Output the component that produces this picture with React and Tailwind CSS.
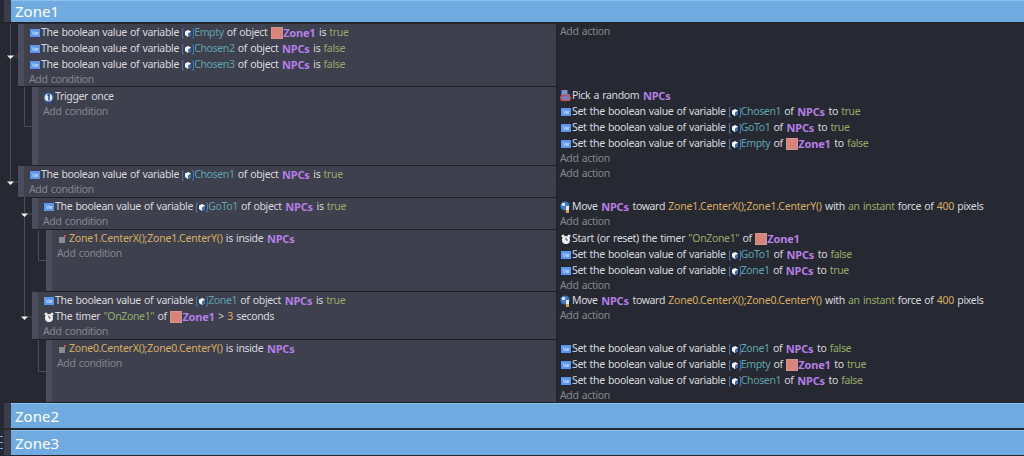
import React from "react";

function VarIcon() {
  return (
    <svg width="10" height="8" viewBox="0 0 10 8" className="shrink-0">
      <rect width="10" height="8" fill="#5b95ee" />
      <text x="5" y="6" fontSize="5" fill="#dbe8fb" textAnchor="middle" fontFamily="Liberation Sans">Var</text>
    </svg>
  );
}

function BoxIcon() {
  return (
    <svg width="12" height="11" viewBox="0 0 12 11" className="shrink-0">
      <path d="M2 1H.5V10H2M10 1H11.500V10H10" stroke="#3f74bd" fill="none" />
      <path d="M6 2l3 1.500V7L6 9 3 7V3.500z" fill="#f4f6fa" />
      <path d="M6 5.500L9 3.500V7L6 9z" fill="#3d6cad" />
    </svg>
  );
}

function Swatch() {
  return <span className="w-3 h-3 shrink-0 bg-[#d9847b] border border-[#c4b0ae]/40" />;
}

function OnceIcon() {
  return (
    <svg width="11" height="11" viewBox="0 0 11 11" className="shrink-0">
      <circle cx="5.500" cy="5.500" r="5.200" fill="#3560a8" />
      <circle cx="5.500" cy="5.500" r="3.800" fill="#dfe8f7" />
      <path d="M4.500 3.600l1.500-1v6" stroke="#24427a" strokeWidth="1.400" fill="none" />
    </svg>
  );
}

function TimerIcon() {
  return (
    <svg width="10" height="11" viewBox="0 0 10 11" className="shrink-0">
      <circle cx="2" cy="2" r="1.500" fill="#e8e8e8" />
      <circle cx="8" cy="2" r="1.500" fill="#e8e8e8" />
      <circle cx="5" cy="6" r="4" fill="#f0f0f0" />
      <path d="M5 3.500v2.500h2" stroke="#555" fill="none" />
    </svg>
  );
}

function InsideIcon() {
  return (
    <svg width="7" height="8" viewBox="0 0 7 8" className="shrink-0">
      <rect y="2" width="6" height="6" fill="#8b8c92" />
      <rect x="5" width="2" height="2" fill="#c4574f" />
    </svg>
  );
}

function PickIcon() {
  return (
    <svg width="11" height="12" viewBox="0 0 11 12" className="shrink-0">
      <rect x="1.500" width="6" height="5" fill="#7f8fd0" />
      <rect x="1" y="4" width="9" height="7" fill="#6d82c9" />
      <ellipse cx="5.500" cy="8" rx="5" ry="2.600" fill="none" stroke="#d24a3c" strokeWidth="1.200" />
    </svg>
  );
}

function MoveIcon() {
  return (
    <svg width="11" height="13" viewBox="0 0 11 13" className="shrink-0">
      <circle cx="5" cy="5" r="4.600" fill="#3f78c8" />
      <circle cx="3.500" cy="3.500" r="1.800" fill="#dbe7f7" />
      <path d="M6 5h3v7H6z" fill="#e9e5dc" />
      <path d="M6 9h3v3H6z" fill="#e2a04a" />
    </svg>
  );
}

const T = ({ children }) => <span className="whitespace-pre">{children}</span>;
const V = ({ children }) => <span className="whitespace-pre text-[#5ea3ad]">{children}</span>;
const O = ({ children }) => <span className="whitespace-pre font-bold text-[11px] tracking-[-0.2px] text-[#b57fe6] px-[0.5px]">{children}</span>;
const B = ({ children }) => <span className="whitespace-pre text-[#95aa68]">{children}</span>;
const Y = ({ children }) => <span className="whitespace-pre tracking-[-0.2px] text-[#d8ae62]">{children}</span>;

function Line({ icon, children }) {
  return (
    <div className="h-4 flex items-center">
      <span className="w-[11px] mr-px flex items-center justify-center shrink-0">{icon}</span>
      {children}
    </div>
  );
}

function Add({ label }) {
  return <div className="h-[14px] leading-[12px] text-[#84858e]">{label}</div>;
}

function Row({ className, indent, condPad = "pt-px", conds, actions, label = "Add condition" }) {
  return (
    <div className={`flex ${className}`}>
      <div className={`${indent} shrink-0`} />
      <div className="w-[6px] shrink-0 bg-[#4b4d5c] border-b border-[#1f2028]" />
      <div className={`flex-1 bg-[#3e404e] border-b border-r border-[#1f2028] pl-[5px] ${condPad}`}>
        {conds}
        <Add label={label} />
      </div>
      <div className="w-[467px] shrink-0 pl-[3px] pt-px">
        {actions}
        <Add label="Add action" />
      </div>
    </div>
  );
}

function Zone({ name, className }) {
  return (
    <div className={`flex ${className}`}>
      <div className="w-1 shrink-0" />
      <div className="w-[7px] shrink-0 bg-[#3b3d4b]" />
      <div className="flex-1 bg-[#6fabe1] border-t border-[#8cc0ee] pl-1 flex items-center text-[15px] tracking-normal text-white">{name}</div>
    </div>
  );
}

function Tree() {
  return (
    <svg width="60" height="456" className="absolute left-0 top-0 pointer-events-none">
      <g stroke="#4a4c59" fill="none">
        <path d="M10.500 24V182M10.500 182H18" />
        <path d="M10.500 56H18" />
        <path d="M24.500 197V317M24.500 317H32" />
        <path d="M24.500 214H32" />
        <path d="M24.500 87V126.500H32" />
        <path d="M38.500 230V260.500H46" />
        <path d="M38.500 340V371.500H46" />
      </g>
      <g fill="#f0f0f0">
        <path d="M7 55.500h7l-3.500 3.500z" />
        <path d="M7 181.500h7l-3.500 3.500z" />
        <path d="M21 213.500h7l-3.500 3.500z" />
        <path d="M21 316.500h7l-3.500 3.500z" />
      </g>
      <path d="M0 436.500h3M0 442.500h3M0 448.500h3" stroke="#6fabe1" />
    </svg>
  );
}

export default function App() {
  return (
    <div className="relative w-[1024px] h-[456px] overflow-hidden bg-[#272932] text-[10.5px] tracking-[-0.35px] [word-spacing:0.8px] text-[#d9d9dd] font-['Noto_Sans',sans-serif]">
      <Zone name="Zone1" className="h-[23px] border-b border-[#1f2028]" />
      <div className="h-px" />
      <Row
        className="h-[63px]"
        indent="w-[18px]"
        conds={
          <>
            <Line icon={<VarIcon />}><T>The boolean value of variable </T><BoxIcon /><V>Empty</V><T> of object </T><Swatch /><O>Zone1</O><T> is </T><B>true</B></Line>
            <Line icon={<VarIcon />}><T>The boolean value of variable </T><BoxIcon /><V>Chosen2</V><T> of object </T><O>NPCs</O><T> is </T><B>false</B></Line>
            <Line icon={<VarIcon />}><T>The boolean value of variable </T><BoxIcon /><V>Chosen3</V><T> of object </T><O>NPCs</O><T> is </T><B>false</B></Line>
          </>
        }
      />
      <Row
        className="h-[79px]"
        indent="w-8"
        condPad="pt-[2px]"
        conds={<Line icon={<OnceIcon />}><T>Trigger once</T></Line>}
        actions={
          <>
            <Line icon={<PickIcon />}><T>Pick a random </T><O>NPCs</O></Line>
            <Line icon={<VarIcon />}><T>Set the boolean value of variable </T><BoxIcon /><V>Chosen1</V><T> of </T><O>NPCs</O><T> to </T><B>true</B></Line>
            <Line icon={<VarIcon />}><T>Set the boolean value of variable </T><BoxIcon /><V>GoTo1</V><T> of </T><O>NPCs</O><T> to </T><B>true</B></Line>
            <Line icon={<VarIcon />}><T>Set the boolean value of variable </T><BoxIcon /><V>Empty</V><T> of </T><Swatch /><O>Zone1</O><T> to </T><B>false</B></Line>
          </>
        }
      />
      <Row
        className="h-8"
        indent="w-[18px]"
        conds={<Line icon={<VarIcon />}><T>The boolean value of variable </T><BoxIcon /><V>Chosen1</V><T> of object </T><O>NPCs</O><T> is </T><B>true</B></Line>}
      />
      <Row
        className="h-8"
        indent="w-8"
        conds={<Line icon={<VarIcon />}><T>The boolean value of variable </T><BoxIcon /><V>GoTo1</V><T> of object </T><O>NPCs</O><T> is </T><B>true</B></Line>}
        actions={<Line icon={<MoveIcon />}><T>Move </T><O>NPCs</O><T> toward </T><Y>Zone1.CenterX();Zone1.CenterY()</Y><T> with </T><B>an instant</B><T> force of </T><Y>400</Y><T> pixels</T></Line>}
      />
      <Row
        className="h-[62px]"
        indent="w-[46px]"
        conds={<Line icon={<InsideIcon />}><Y>Zone1.CenterX();Zone1.CenterY()</Y><T> is inside </T><O>NPCs</O></Line>}
        actions={
          <>
            <Line icon={<TimerIcon />}><T>Start (or reset) the timer </T><B>"OnZone1"</B><T> of </T><Swatch /><O>Zone1</O></Line>
            <Line icon={<VarIcon />}><T>Set the boolean value of variable </T><BoxIcon /><V>GoTo1</V><T> of </T><O>NPCs</O><T> to </T><B>false</B></Line>
            <Line icon={<VarIcon />}><T>Set the boolean value of variable </T><BoxIcon /><V>Zone1</V><T> of </T><O>NPCs</O><T> to </T><B>true</B></Line>
          </>
        }
      />
      <Row
        className="h-12"
        indent="w-8"
        conds={
          <>
            <Line icon={<VarIcon />}><T>The boolean value of variable </T><BoxIcon /><V>Zone1</V><T> of object </T><O>NPCs</O><T> is </T><B>true</B></Line>
            <Line icon={<TimerIcon />}><T>The timer </T><B>"OnZone1"</B><T> of </T><Swatch /><O>Zone1</O><T> &gt; </T><Y>3</Y><T> seconds</T></Line>
          </>
        }
        actions={<Line icon={<MoveIcon />}><T>Move </T><O>NPCs</O><T> toward </T><Y>Zone0.CenterX();Zone0.CenterY()</Y><T> with </T><B>an instant</B><T> force of </T><Y>400</Y><T> pixels</T></Line>}
      />
      <Row
        className="h-[63px]"
        indent="w-[46px]"
        conds={<Line icon={<InsideIcon />}><Y>Zone0.CenterX();Zone0.CenterY()</Y><T> is inside </T><O>NPCs</O></Line>}
        actions={
          <>
            <Line icon={<VarIcon />}><T>Set the boolean value of variable </T><BoxIcon /><V>Zone1</V><T> of </T><O>NPCs</O><T> to </T><B>false</B></Line>
            <Line icon={<VarIcon />}><T>Set the boolean value of variable </T><BoxIcon /><V>Empty</V><T> of </T><Swatch /><O>Zone1</O><T> to </T><B>true</B></Line>
            <Line icon={<VarIcon />}><T>Set the boolean value of variable </T><BoxIcon /><V>Chosen1</V><T> of </T><O>NPCs</O><T> to </T><B>false</B></Line>
          </>
        }
      />
      <Zone name="Zone2" className="h-[25px]" />
      <div className="h-[2px]" />
      <Zone name="Zone3" className="h-[25px]" />
      <Tree />
    </div>
  );
}
